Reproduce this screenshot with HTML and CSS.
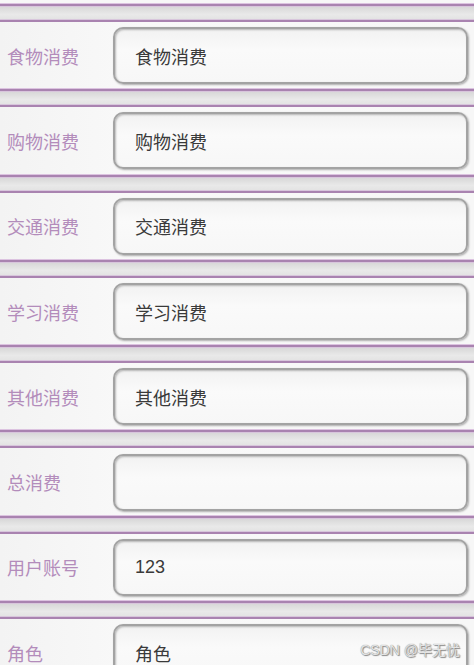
FILE: index.html
```html
<!DOCTYPE html>
<html lang="zh">
<head>
<meta charset="utf-8">
<link rel="stylesheet" href="styles.css">
</head>
<body>
<div class="form">
  <div class="sep"></div>
  <div class="row"><label class="lbl">食物消费</label><input class="field" value="食物消费"></div>
  <div class="sep"></div>
  <div class="row"><label class="lbl">购物消费</label><input class="field" value="购物消费"></div>
  <div class="sep"></div>
  <div class="row"><label class="lbl">交通消费</label><input class="field" value="交通消费"></div>
  <div class="sep"></div>
  <div class="row"><label class="lbl">学习消费</label><input class="field" value="学习消费"></div>
  <div class="sep"></div>
  <div class="row"><label class="lbl">其他消费</label><input class="field" value="其他消费"></div>
  <div class="sep"></div>
  <div class="row"><label class="lbl">总消费</label><input class="field" value=""></div>
  <div class="sep"></div>
  <div class="row"><label class="lbl">用户账号</label><input class="field" value="123"></div>
  <div class="sep"></div>
  <div class="row"><label class="lbl">角色</label><input class="field" value="角色"></div>
</div>
<div class="watermark">CSDN @毕无忧</div>
</body>
</html>
```

FILE: styles.css
```css
html, body {
  margin: 0;
  padding: 0;
  height: 100%;
  overflow: hidden;
}
body {
  background: #f7f7f7;
  font-family: "Liberation Sans", "Noto Sans CJK SC", sans-serif;
  position: relative;
}
.form {
  padding-top: 4px;
}
.sep {
  height: 14px;
  border-top: 2px solid #a983b0;
  border-bottom: 2px solid #a983b0;
  box-shadow: 0 -1px 0 #dcc3e0, 0 1px 0 #dcc3e0, inset 0 1px 0 #d8c6dc, inset 0 -1px 0 #d8c6dc;
  background: linear-gradient(#d6d6d6, #e9e9e9 60%, #e2e2e2);
}
.row {
  height: 67.3px;
  display: flex;
  align-items: center;
  padding-left: 7px;
  background: linear-gradient(90deg, #f3f3f3, #f9f9f9 30%, #f7f7f7);
}
.lbl {
  width: 106px;
  flex: none;
  font-size: 18px;
  color: #b38cbb;
}
.field {
  box-sizing: border-box;
  width: 355px;
  height: 57px;
  margin: 0;
  padding: 0 0 0 20px;
  border: 2px solid #a3a3a3;
  border-radius: 10px;
  background: linear-gradient(#f2f2f2, #fafafa 40%, #f7f7f7);
  box-shadow: inset 1px 1px 2px rgba(0,0,0,0.25), 1px 1px 2px rgba(0,0,0,0.3);
  font-family: "Liberation Sans", "Noto Sans CJK SC", sans-serif;
  font-size: 18px;
  color: #3a3a3a;
  outline: none;
}
.watermark {
  position: absolute;
  right: 14px;
  bottom: 6px;
  font-size: 14px;
  color: #e4e4e4;
  text-shadow: 0 0 1px #777, 1px 1px 1px #888;
}
```
